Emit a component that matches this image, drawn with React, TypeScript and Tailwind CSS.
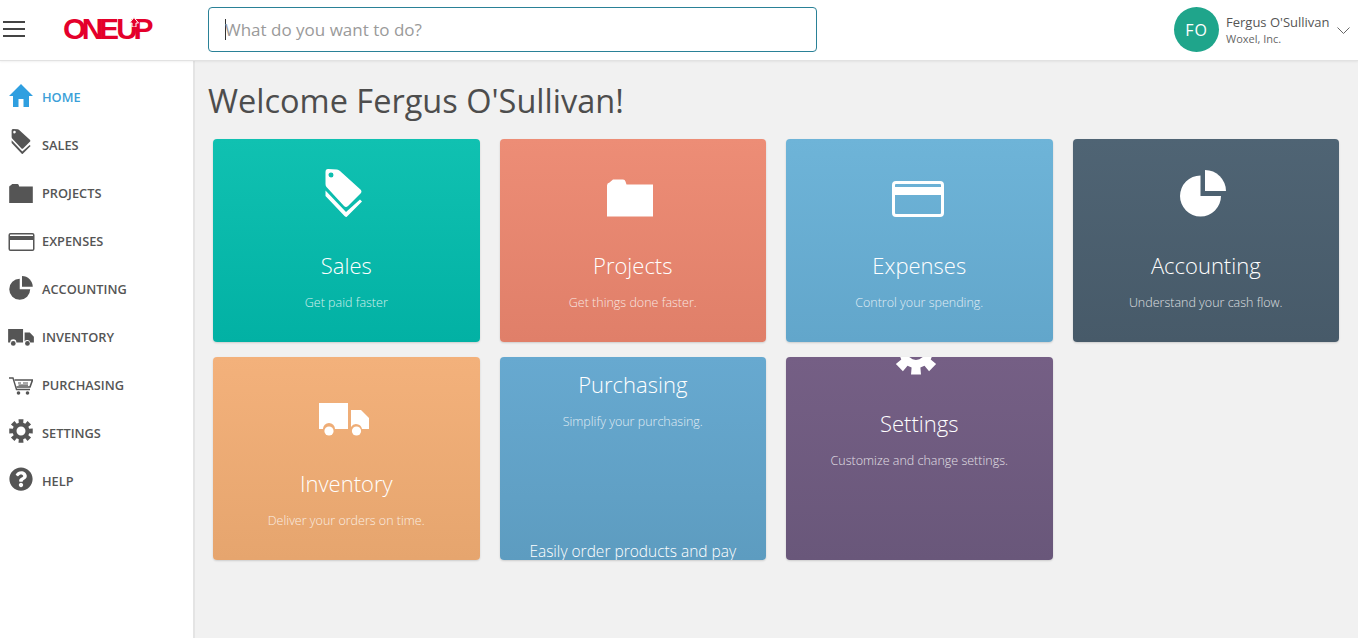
import React from "react";
import { FaQuestionCircle } from "react-icons/fa";

const Home = ({ className }: { className: string }) => (
  <svg viewBox="0 0 24 23" className={className} fill="currentColor"><path d="M12 0 L24 12 H20 V23 H14.5 V15 H9.5 V23 H4 V12 H0 Z" /></svg>
);
const Tag = ({ className }: { className: string }) => (
  <svg viewBox="0 0 37 48" className={className} fill="currentColor">
    <path fillRule="evenodd" d="M3 0 L12 0.5 Q13.5 0.7 15 2 L36 21 Q37 23 36 24 L23 37 Q21 39 19 37 L1.5 18 Q0.5 17 0.5 15 L0.5 3 Q0.5 0 3 0 Z M6 3.5 A2.5 2.5 0 1 0 6.01 8.5 A2.5 2.5 0 1 0 6 3.5 Z" />
    <path d="M0.5 21.5 L21 43 L35 30.5 L37 32.5 L21.5 48 Q20.5 48 19.5 47 L0.5 27 Z" />
  </svg>
);
const Folder = ({ className }: { className: string }) => (
  <svg viewBox="0 0 46 37" className={className} fill="currentColor"><path d="M0 6 Q0 3.5 2.5 3 L6 0 H16 Q18 0 18.5 2 L19.5 5 H46 V37 H0 Z" /></svg>
);
const Card = ({ className }: { className: string }) => (
  <svg viewBox="0 0 52 36" className={className} fill="none" stroke="currentColor">
    <rect x="1.5" y="1.5" width="49" height="33" rx="2.5" strokeWidth="3" />
    <rect x="1" y="6" width="50" height="8" fill="currentColor" stroke="none" />
  </svg>
);
const Pie = ({ className }: { className: string }) => (
  <svg viewBox="0 0 46 47" className={className} fill="currentColor">
    <path d="M20.5 5.5 V26 H41 A20.5 20.5 0 1 1 20.5 5.5 Z" />
    <path d="M25 0 A21 21 0 0 1 46 21 H25 Z" />
  </svg>
);
const Truck = ({ className }: { className: string }) => (
  <svg viewBox="0 0 50 33" className={className} fill="currentColor">
    <path d="M0 0 H29 V26 H16 A6 6 0 0 0 4 26 H0 Z" />
    <path d="M32 7 H42 L50 15 V26 H43 A6 6 0 0 0 32 24 Z" />
    <circle cx="10" cy="28" r="4.6" />
    <circle cx="37.5" cy="28" r="4.6" />
  </svg>
);
const Cart = ({ className }: { className: string }) => (
  <svg viewBox="0 0 24 18" className={className} fill="none" stroke="currentColor">
    <path d="M0 1 H4 L7.5 12.5 H21" strokeWidth="1.4" />
    <path d="M5.5 3 H23.5 L21 10 H7.5" strokeWidth="1.6" />
    <path d="M9 6 H12 M14 6 H19 M9.5 8.2 H19" strokeWidth="1.2" />
    <circle cx="9.5" cy="16" r="1.8" fill="currentColor" stroke="none" />
    <circle cx="18.5" cy="16" r="1.8" fill="currentColor" stroke="none" />
  </svg>
);

function gearPath() {
  const pt = (r: number, deg: number) => {
    const a = (deg * Math.PI) / 180;
    return `${(24 + r * Math.cos(a)).toFixed(2)} ${(24 + r * Math.sin(a)).toFixed(2)}`;
  };
  let d = "";
  for (let i = 0; i < 8; i++) {
    const c = i * 45;
    d += `${i === 0 ? "M" : "L"}${pt(17, c - 15)} L${pt(24, c - 12)} L${pt(24, c + 12)} L${pt(17, c + 15)} `;
  }
  d += "Z M33 24 A9 9 0 1 0 15 24 A9 9 0 1 0 33 24 Z";
  return d;
}
const Gear = ({ className }: { className: string }) => (
  <svg viewBox="0 0 48 48" className={className} fill="currentColor"><path fillRule="evenodd" d={gearPath()} /></svg>
);

const nav = [
  { label: "HOME", icon: <Home className="w-[24px] h-[23px] -mt-[5px] text-[#2f9fe0]" />, active: true },
  { label: "SALES", icon: <Tag className="w-[20px] h-[25px] -mt-[9px] text-[#555555]" /> },
  { label: "PROJECTS", icon: <Folder className="w-[24px] h-[19px] -mt-[2px] text-[#555555]" /> },
  { label: "EXPENSES", icon: <Card className="w-[27px] h-[18px] -mt-[1px] text-[#555555]" /> },
  { label: "ACCOUNTING", icon: <Pie className="w-[24px] h-[24px] -mt-[5px] text-[#555555]" /> },
  { label: "INVENTORY", icon: <Truck className="w-[26px] h-[17px] -mt-[1px] text-[#555555]" /> },
  { label: "PURCHASING", icon: <Cart className="w-[24px] h-[18px] -mt-[1px] text-[#555555]" /> },
  { label: "SETTINGS", icon: <Gear className="w-[24px] h-[24px] -mt-[6px] text-[#555555]" /> },
  { label: "HELP", icon: <FaQuestionCircle className="w-[24px] h-[24px] -mt-[6px] text-[#555555]" /> },
];

function Tile({
  bg,
  title,
  sub,
  icon,
  top,
  extra,
}: {
  bg: string;
  title: string;
  sub: string;
  icon?: React.ReactNode;
  top: string;
  extra?: React.ReactNode;
}) {
  return (
    <div className={`h-[203px] rounded-[4px] overflow-hidden shadow-[0_1px_2px_rgba(0,0,0,0.15)] text-white flex flex-col items-center ${bg} ${top}`}>
      {icon}
      <div className="text-[22px] leading-[30px] font-light">{title}</div>
      <div className="text-[12.5px] leading-[16px] font-light opacity-80 mt-[15px]">{sub}</div>
      {extra}
    </div>
  );
}

const IconBox = ({ children, className }: { children: React.ReactNode; className: string }) => (
  <div className={`flex items-end justify-center ${className}`}>{children}</div>
);

export default function App() {
  return (
    <div className="h-[638px] w-[1358px] overflow-hidden flex flex-col bg-[#f1f1f1] text-[#555555] font-['Open_Sans',sans-serif]">
      <header className="h-[61px] shrink-0 bg-white flex items-center border-b border-[#e2e2e2] relative z-10 shadow-[0_1px_2px_rgba(0,0,0,0.06)]">
        <div className="w-[24px] ml-[3px] flex flex-col gap-[5px] -mt-[2px]">
          <div className="h-[2px] w-[22px] bg-[#444444]" />
          <div className="h-[2px] w-[22px] bg-[#444444]" />
          <div className="h-[2px] w-[22px] bg-[#444444]" />
        </div>
        <div className="w-[181px] pl-[36px] -mt-[3px] relative font-['Liberation_Sans',sans-serif] font-bold text-[30px] leading-[30px] tracking-[-4.5px] [word-spacing:-2px] text-[#e4002b] whitespace-nowrap">
          ONE UP
          <svg viewBox="0 0 10 10" className="absolute left-[102px] top-[3px] w-[10px] h-[10px]">
            <path d="M5 0.5 L9.5 6 H7 V10 H3 V6 H0.5 Z" fill="#e4002b" stroke="#ffffff" strokeWidth="1" />
          </svg>
        </div>
        <div className="w-[609px] h-[45px] -mt-[1px] border border-[#2a8197] rounded-[4px] bg-white flex items-center pl-[16px]">
          <div className="w-px h-[21px] bg-[#333333]" />
          <span className="text-[17px] text-[#9a9a9a] -ml-px">What do you want to do?</span>
        </div>
        <div className="ml-auto flex items-center -mt-[1px]">
          <div className="w-[45px] h-[45px] rounded-full bg-[#1fa58b] text-white text-[16px] flex items-center justify-center tracking-[1px]">FO</div>
          <div className="ml-[7px] w-[111px]">
            <div className="text-[13px] leading-[18px] text-[#555555]">Fergus O'Sullivan</div>
            <div className="text-[11px] leading-[16px] text-[#666666]">Woxel, Inc.</div>
          </div>
          <svg viewBox="0 0 13 7" className="w-[13px] h-[7px] mr-[8px] mt-[2px]" fill="none" stroke="#666666" strokeWidth="1"><path d="M0.5 0.5 L6.5 6.5 L12.5 0.5" /></svg>
        </div>
      </header>
      <div className="flex-1 flex min-h-0">
        <aside className="w-[195px] shrink-0 bg-white border-r-2 border-[#e4e4e4] pt-[13px]">
          {nav.map((n) => (
            <div key={n.label} className="h-[48px] flex items-center">
              <div className="w-[42px] flex items-center justify-center">{n.icon}</div>
              <span className={`text-[12.8px] font-semibold ${n.active ? "text-[#3b9fd8]" : "text-[#555555]"}`}>{n.label}</span>
            </div>
          ))}
        </aside>
        <main className="flex-1 pl-[13px]">
          <h1 className="text-[32.5px] leading-[46px] text-[#4d4d4d] mt-[17px] mb-[15px]">Welcome Fergus O'Sullivan!</h1>
          <div className="ml-[5px] w-[1126px] grid grid-cols-4 gap-x-[20px] gap-y-[15px]">
            <Tile
              bg="bg-gradient-to-b from-[#10c1b1] to-[#02b1a4]"
              title="Sales"
              sub="Get paid faster"
              top="pt-[30px]"
              icon={<IconBox className="h-[48px] mb-[33px] -ml-[5px]"><Tag className="w-[37px] h-[48px]" /></IconBox>}
            />
            <Tile
              bg="bg-gradient-to-b from-[#ed8d76] to-[#e07f69]"
              title="Projects"
              sub="Get things done faster."
              top="pt-[30px]"
              icon={<IconBox className="h-[48px] mb-[33px] -ml-[6px]"><Folder className="w-[46px] h-[38px]" /></IconBox>}
            />
            <Tile
              bg="bg-gradient-to-b from-[#6eb4d8] to-[#62a6cb]"
              title="Expenses"
              sub="Control your spending."
              top="pt-[30px]"
              icon={<IconBox className="h-[48px] mb-[33px] -ml-[2px]"><Card className="w-[52px] h-[36px]" /></IconBox>}
            />
            <Tile
              bg="bg-gradient-to-b from-[#4f6474] to-[#475a69]"
              title="Accounting"
              sub="Understand your cash flow."
              top="pt-[30px]"
              icon={<IconBox className="h-[48px] mb-[33px] -ml-[6px]"><Pie className="w-[46px] h-[47px]" /></IconBox>}
            />
            <Tile
              bg="bg-gradient-to-b from-[#f3b17b] to-[#e6a56e]"
              title="Inventory"
              sub="Deliver your orders on time."
              top="pt-[30px]"
              icon={<IconBox className="h-[48px] mb-[33px] -ml-[5px]"><Truck className="w-[50px] h-[33px] mb-[-1px]" /></IconBox>}
            />
            <Tile
              bg="bg-gradient-to-b from-[#67a9d0] to-[#5d9cc0]"
              title="Purchasing"
              sub="Simplify your purchasing."
              top="pt-[12px]"
              extra={<div className="text-[15.5px] leading-[22px] font-light mt-[110px] whitespace-nowrap">Easily order products and pay</div>}
            />
            <Tile
              bg="bg-gradient-to-b from-[#755f85] to-[#69577a]"
              title="Settings"
              sub="Customize and change settings."
              top=""
              icon={<IconBox className="-mt-[30px] mb-[33px] -ml-[6px]"><Gear className="w-[48px] h-[48px]" /></IconBox>}
            />
          </div>
        </main>
      </div>
    </div>
  );
}
